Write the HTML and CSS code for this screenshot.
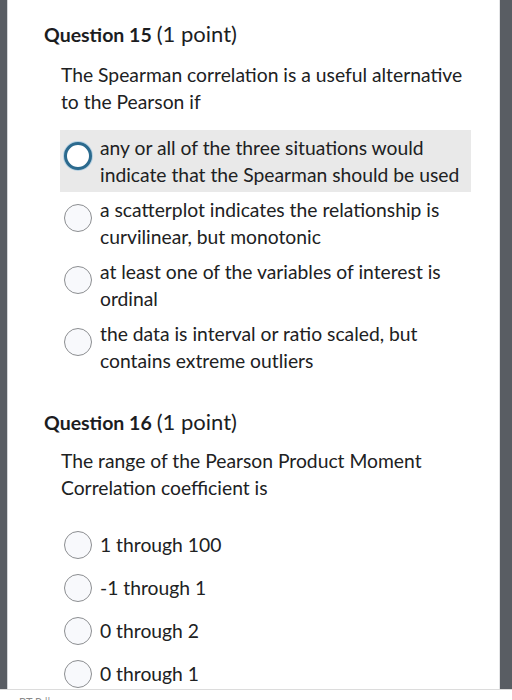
FILE: index.html
```html
<!DOCTYPE html>
<html lang="en">
<head>
<meta charset="utf-8">
<title>Quiz</title>
<link rel="stylesheet" href="styles.css">
</head>
<body>
<div class="page">
  <div class="frame">
    <div class="bar bar-left"></div>
    <main class="content">
      <section class="question">
        <h2 class="q-title"><span class="q-num">Question 15</span> <span class="q-pts">(1 point)</span></h2>
        <p class="q-text">The Spearman correlation is a useful alternative to the Pearson if</p>
        <ul class="options">
          <li class="option option-hover"><span class="radio radio-focus"></span><span class="opt-text">any or all of the three situations would indicate that the Spearman should be used</span></li>
          <li class="option"><span class="radio"></span><span class="opt-text">a scatterplot indicates the relationship is curvilinear, but monotonic</span></li>
          <li class="option"><span class="radio"></span><span class="opt-text">at least one of the variables of interest is ordinal</span></li>
          <li class="option"><span class="radio"></span><span class="opt-text">the data is interval or ratio scaled, but contains extreme outliers</span></li>
        </ul>
      </section>
      <section class="question question-2">
        <h2 class="q-title"><span class="q-num">Question 16</span> <span class="q-pts">(1 point)</span></h2>
        <p class="q-text q-text-2">The range of the Pearson Product Moment Correlation coefficient is</p>
        <ul class="options options-short">
          <li class="option option-short"><span class="radio"></span><span class="opt-text">1 through 100</span></li>
          <li class="option option-short"><span class="radio"></span><span class="opt-text">-1 through 1</span></li>
          <li class="option option-short"><span class="radio"></span><span class="opt-text">0 through 2</span></li>
          <li class="option option-short"><span class="radio"></span><span class="opt-text">0 through 1</span></li>
        </ul>
      </section>
    </main>
    <div class="bar bar-right"></div>
  </div>
  <footer class="footer">BT R ||</footer>
</div>
</body>
</html>
```

FILE: styles.css
```css
html, body {
  margin: 0;
  padding: 0;
  background: #ffffff;
  overflow: hidden;
}

.page {
  width: 512px;
  height: 700px;
  overflow: hidden;
  font-family: Lato, "Noto Sans", sans-serif;
  color: #202122;
}

.frame {
  display: flex;
  height: 689px;
}

.bar {
  background: #595d63;
  flex: none;
}

.bar-left {
  width: 7px;
  border-right: 1px solid #d4d6d8;
}

.bar-right {
  width: 12px;
  border-left: 1px solid #e3e4e6;
}

.content {
  flex: 1;
  padding: 21px 0 0 36px;
}

.q-title {
  margin: 0;
  font-size: 19.5px;
  line-height: 26px;
  font-weight: 400;
  color: #1c1d1f;
}

.q-num {
  font-weight: 700;
}

.q-pts {
  font-size: 22px;
}

.q-text {
  margin: 13px 0 0 17px;
  font-size: 19.3px;
  line-height: 27px;
  width: 418px;
}

.options {
  list-style: none;
  margin: 15px 0 0 16px;
  padding: 0;
  width: 411px;
}

.option {
  display: flex;
  align-items: flex-start;
  gap: 8px;
  padding: 4px 4px;
  font-size: 19.3px;
  line-height: 27px;
  min-height: 54px;
}

.option-hover {
  background: #e9e9e9;
}

.radio {
  flex: none;
  box-sizing: border-box;
  width: 28px;
  height: 28px;
  margin-top: 8px;
  border-radius: 50%;
  border: 1.5px solid #8c8e91;
  background: #f8f9fc;
}

.radio-focus {
  border: 3px solid #2b6a8e;
  background: #ffffff;
  box-shadow: 0 0 0 1px rgba(140, 190, 220, 0.55);
}

.question-2 {
  margin-top: 31px;
}

.q-text-2 {
  margin-top: 11px;
}

.options-short {
  margin-top: 22px;
}

.option-short {
  min-height: 0;
  height: 43px;
  box-sizing: border-box;
  align-items: center;
  padding: 0 4px;
}

.option-short .radio {
  margin-top: 0;
}

.footer {
  border-top: 1px solid #dcdcdc;
  padding: 5px 0 0 19px;
  font-size: 11px;
  line-height: 14px;
  color: #8a8a8a;
}
```
